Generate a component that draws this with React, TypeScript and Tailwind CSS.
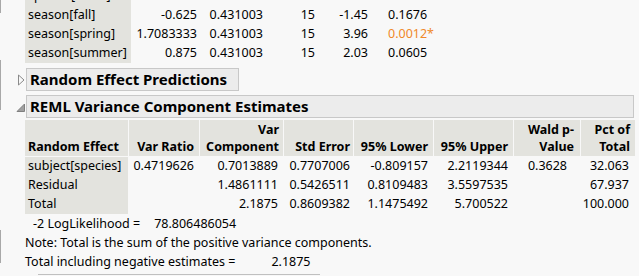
import React from "react";

const font = { fontFamily: '"Noto Sans", "Open Sans", sans-serif' };

function TopRow({ a, b, c, d, e, f, fClass }: { a: string; b: string; c: string; d: string; e: string; f: string; fClass?: string }) {
  return (
    <div className="flex h-[19px] items-center text-[12.5px] leading-none whitespace-nowrap">
      <div className="w-[106px] h-full bg-[#e3e3de] flex items-center pl-[3px]">{a}</div>
      <div className="w-[66px] text-right">{b}</div>
      <div className="w-[66px] text-right">{c}</div>
      <div className="w-[52px] text-right">{d}</div>
      <div className="w-[53px] text-right">{e}</div>
      <div className={"pl-[20px] " + (fClass ?? "")}>{f}</div>
    </div>
  );
}

const widths = ["w-[103px]", "w-[70px]", "w-[83px]", "w-[69px]", "w-[79px]", "w-[79px]", "w-[66px]", "w-[54px]"];

function DataRow({ cells }: { cells: string[] }) {
  return (
    <div className="flex gap-x-[1px] h-[19px] items-center text-[12.5px] leading-none whitespace-nowrap">
      <div className="w-[103px] h-full bg-[#e3e3de] flex items-center pl-[3px]">{cells[0]}</div>
      <div className="w-[70px] text-right pr-[5px]">{cells[1]}</div>
      <div className="w-[83px] text-right pr-[5px]">{cells[2]}</div>
      <div className="w-[69px] text-right pr-[3px]">{cells[3]}</div>
      <div className="w-[79px] text-right pr-[5px]">{cells[4]}</div>
      <div className="w-[79px] text-right pr-[5px]">{cells[5]}</div>
      <div className="w-[66px] text-right pr-[13px]">{cells[6]}</div>
      <div className="w-[54px] text-right pr-[6px]">{cells[7]}</div>
    </div>
  );
}

export default function App() {
  return (
    <div className="relative w-[639px] h-[276px] overflow-hidden bg-[#f8f8f8] text-black" style={font}>
      <div className="absolute left-0 top-0 w-[1px] h-[13px] bg-[#a8a8a8]" />
      <div className="absolute left-0 top-[60px] w-[1px] h-[50px] bg-[#a8a8a8]" />
      <div className="absolute left-0 top-[230px] w-[1px] h-[33px] bg-[#a8a8a8]" />

      <div className="pl-[25px] -mt-[13px]">
        <TopRow a="species[Ce Te]" b="1.458333" c="0.42207" d="7" e="3.45" f="0.0201*" fClass="text-[#e8402a]" />
        <TopRow a="season[fall]" b="-0.625" c="0.431003" d="15" e="-1.45" f="0.1676" />
        <TopRow a="season[spring]" b="1.7083333" c="0.431003" d="15" e="3.96" f="0.0012*" fClass="text-[#f0892a]" />
        <TopRow a="season[summer]" b="0.875" c="0.431003" d="15" e="2.03" f="0.0605" />
      </div>

      <div className="flex items-center mt-[5px] pl-[17px]">
        <svg width="9" height="12" viewBox="0 0 9 12">
          <path d="M1.5 1 L7 6 L1.5 11 Z" fill="#f8f8f8" stroke="#8a8a8a" strokeWidth="1" />
        </svg>
        <div className="w-[213px] h-[23px] border border-[#c8c8c8] bg-[#ececec] flex items-center pl-[3px] text-[15px] font-bold leading-none whitespace-nowrap">
          Random Effect Predictions
        </div>
      </div>

      <div className="flex items-center mt-[4px] pl-[16px]">
        <svg width="10" height="12" viewBox="0 0 10 12">
          <path d="M8.5 3 L8.5 10.5 L1 10.5 Z" fill="#a0a0a0" stroke="#808080" strokeWidth="1" />
        </svg>
        <div className="w-[608px] h-[23px] border border-[#c8c8c8] bg-[#ececec] flex items-center pl-[3px] text-[15px] font-bold leading-none whitespace-nowrap">
          REML Variance Component Estimates
        </div>
      </div>

      <div className="pl-[25px] mt-[2px]">
        <div className="flex gap-x-[1px] h-[36px] text-[12.5px] font-bold leading-[17px] whitespace-nowrap">
          {[
            ["", "Random Effect", "left", "pl-[3px]"],
            ["", "Var Ratio", "right", "pr-[5px]"],
            ["Var", "Component", "right", "pr-[4px]"],
            ["", "Std Error", "right", "pr-[3px]"],
            ["", "95% Lower", "right", "pr-[5px]"],
            ["", "95% Upper", "right", "pr-[5px]"],
            ["Wald p-", "Value", "right", "pr-[6px]"],
            ["Pct of", "Total", "right", "pr-[5px]"],
          ].map(([l1, l2, align, pad], i) => (
            <div
              key={i}
              className={
                widths[i] +
                " bg-[#e3e3de] flex flex-col justify-end pb-[1px] " +
                pad +
                (align === "right" ? " items-end" : " items-start")
              }
            >
              {l1 ? <div>{l1}</div> : null}
              <div>{l2}</div>
            </div>
          ))}
        </div>
        <div className="mt-[1px]">
          <DataRow cells={["subject[species]", "0.4719626", "0.7013889", "0.7707006", "-0.809157", "2.2119344", "0.3628", "32.063"]} />
          <DataRow cells={["Residual", "", "1.4861111", "0.5426511", "0.8109483", "3.5597535", "", "67.937"]} />
          <DataRow cells={["Total", "", "2.1875", "0.8609382", "1.1475492", "5.700522", "", "100.000"]} />
        </div>
      </div>

      <div className="pl-[25px] text-[12.5px] leading-none whitespace-nowrap">
        <div className="h-[19px] flex items-center pl-[8px] mt-[1px]">
          <span>-2 LogLikelihood =</span>
          <span className="ml-[14px]">78.806486054</span>
        </div>
        <div className="h-[19px] flex items-center">Note: Total is the sum of the positive variance components.</div>
        <div className="h-[19px] flex items-center">
          <span>Total including negative estimates =</span>
          <span className="ml-[36px]">2.1875</span>
        </div>
        <div className="ml-[13px] mt-[2px] w-[282px] h-[1px] bg-[#c0c0c0]" />
      </div>
    </div>
  );
}
